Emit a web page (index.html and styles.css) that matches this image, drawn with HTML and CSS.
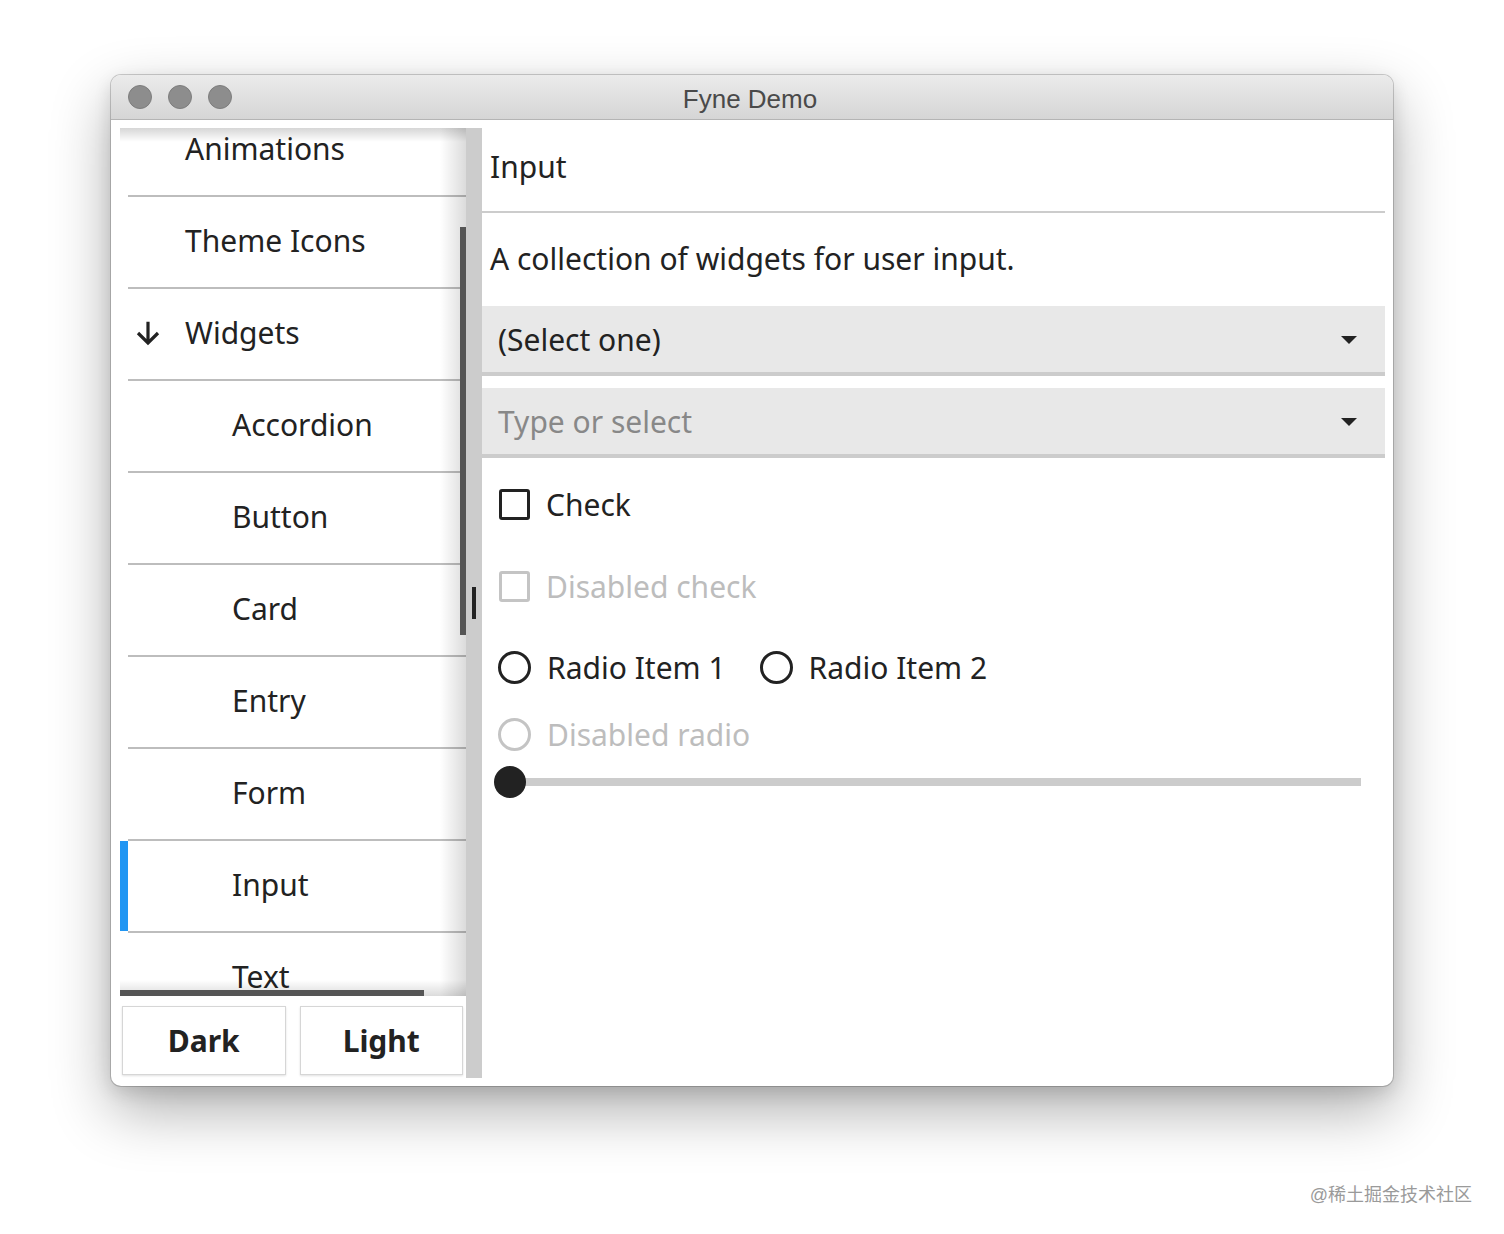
FILE: index.html
```html
<!DOCTYPE html>
<html lang="en">

<head>
    <meta charset="UTF-8">
    <title>Fyne Demo</title>
    <link rel="stylesheet" href="styles.css">
</head>

<body>
    <div class="window">
        <div class="titlebar">
            <div class="lights">
                <span></span>
                <span></span>
                <span></span>
            </div>
            <div class="title">Fyne Demo</div>
        </div>
        <div class="content">
            <div class="sidebar">
                <div class="nav">
                    <ul class="nav-list">
                        <li>Animations</li>
                        <li>Theme Icons</li>
                        <li class="branch">
                            <svg class="arrow" width="32" height="32" viewBox="0 0 24 24">
                                <path d="M12 3.5v16M4.5 12L12 19.5l7.5-7.5" fill="none" stroke="#222" stroke-width="2.4" />
                            </svg>
                            Widgets
                        </li>
                        <li class="child">Accordion</li>
                        <li class="child">Button</li>
                        <li class="child">Card</li>
                        <li class="child">Entry</li>
                        <li class="child">Form</li>
                        <li class="child active">Input</li>
                        <li class="child">Text</li>
                    </ul>
                    <div class="shade-top"></div>
                    <div class="shade-right"></div>
                    <div class="shade-bottom"></div>
                    <div class="vscroll"></div>
                    <div class="hscroll"></div>
                </div>
                <div class="theme-btns">
                    <div class="btn">Dark</div>
                    <div class="btn">Light</div>
                </div>
            </div>
            <div class="split"><span class="handle"></span></div>
            <div class="main">
                <div class="page-title">Input</div>
                <div class="page-intro">A collection of widgets for user input.</div>
                <div class="select">
                    <span>(Select one)</span>
                    <i class="caret"></i>
                </div>
                <div class="select entry">
                    <span>Type or select</span>
                    <i class="caret"></i>
                </div>
                <div class="row check-row">
                    <i class="box"></i>
                    <span>Check</span>
                </div>
                <div class="row check-row disabled">
                    <i class="box"></i>
                    <span>Disabled check</span>
                </div>
                <div class="row radio-row">
                    <div class="radio"><i class="dot"></i><span>Radio Item 1</span></div>
                    <div class="radio"><i class="dot"></i><span>Radio Item 2</span></div>
                </div>
                <div class="row radio-row disabled off">
                    <div class="radio"><i class="dot"></i><span>Disabled radio</span></div>
                </div>
                <div class="slider">
                    <div class="track"></div>
                    <div class="thumb"></div>
                </div>
            </div>
        </div>
    </div>
    <div class="watermark">@稀土掘金技术社区</div>
</body>

</html>
```

FILE: styles.css
```css
* {
    padding: 0;
    margin: 0;
    box-sizing: border-box;
}

body {
    width: 1504px;
    height: 1234px;
    background: #fff;
    font-family: "Noto Sans", "Open Sans", sans-serif;
    color: #222;
    position: relative;
    overflow: hidden;
    padding: 75px 0 0 111px;
}

.window {
    width: 1282px;
    height: 1011px;
    border-radius: 10px;
    overflow: hidden;
    display: flex;
    flex-direction: column;
    background: #fff;
    box-shadow: 0 0 0 1px rgba(0, 0, 0, 0.18), 0 24px 60px rgba(0, 0, 0, 0.32), 0 6px 18px rgba(0, 0, 0, 0.12);
}

.titlebar {
    position: relative;
    height: 45px;
    flex: none;
    background: linear-gradient(#ebebeb, #d5d5d5);
    border-bottom: 1px solid #b4b4b4;
    display: flex;
    align-items: center;
    justify-content: center;
}

.lights {
    position: absolute;
    left: 17px;
    top: 10px;
    display: flex;
    gap: 16px;
}

.lights span {
    width: 24px;
    height: 24px;
    border-radius: 50%;
    background: #8d8d8d;
    border: 1px solid #7d7d7d;
}

.title {
    font-family: "Liberation Sans", Arial, sans-serif;
    font-size: 26px;
    color: #4a4a4a;
    margin-top: 4px;
    margin-left: -4px;
}

.content {
    flex: 1;
    display: flex;
    padding: 8px 8px 8px 9px;
    min-height: 0;
}

/* sidebar */
.sidebar {
    width: 346px;
    display: flex;
    flex-direction: column;
}

.nav {
    position: relative;
    height: 868px;
    overflow: hidden;
}

.nav-list {
    list-style: none;
    margin-top: -23px;
}

.nav-list li {
    position: relative;
    margin-left: 8px;
    height: 92px;
    border-bottom: 2px solid #bdbdbd;
    display: flex;
    align-items: center;
    padding: 0 0 3px 57px;
    font-size: 30px;
}

.nav-list .branch .arrow {
    position: absolute;
    left: 4px;
    top: 28px;
}

.nav-list .child {
    padding-left: 104px;
}

.nav-list .active::before {
    content: "";
    position: absolute;
    left: -8px;
    top: 0;
    bottom: 0;
    width: 8px;
    background: #2196f3;
}

.shade-top {
    position: absolute;
    top: 0;
    left: 0;
    right: 0;
    height: 14px;
    background: linear-gradient(rgba(0, 0, 0, 0.16), rgba(0, 0, 0, 0));
}

.shade-right {
    position: absolute;
    top: 0;
    right: 0;
    bottom: 0;
    width: 26px;
    background: linear-gradient(to right, rgba(0, 0, 0, 0), rgba(0, 0, 0, 0.14));
}

.shade-bottom {
    position: absolute;
    left: 0;
    right: 0;
    bottom: 0;
    height: 16px;
    background: linear-gradient(rgba(0, 0, 0, 0), rgba(0, 0, 0, 0.14));
}

.vscroll {
    position: absolute;
    right: 0;
    top: 99px;
    width: 6px;
    height: 408px;
    background: #555;
}

.hscroll {
    position: absolute;
    left: 0;
    bottom: 0;
    width: 304px;
    height: 6px;
    background: #555;
}

.theme-btns {
    display: flex;
    gap: 14px;
    padding: 10px 3px 0 2px;
}

.btn {
    flex: 1;
    height: 69px;
    background: #fff;
    border: 1px solid #d6d6d6;
    box-shadow: 0 1px 2px rgba(0, 0, 0, 0.12);
    display: flex;
    align-items: center;
    justify-content: center;
    font-size: 30px;
    font-weight: bold;
}

.split {
    position: relative;
    width: 16px;
    background: #cccccc;
}

.split .handle {
    position: absolute;
    left: 6px;
    top: 459px;
    width: 4px;
    height: 32px;
    background: #222;
}

/* main panel */
.main {
    flex: 1;
    display: flex;
    flex-direction: column;
}

.page-title {
    height: 85px;
    padding: 0 0 7px 8px;
    display: flex;
    align-items: center;
    font-size: 30px;
    border-bottom: 2px solid #cccccc;
}

.page-intro {
    height: 93px;
    padding: 0 0 2px 8px;
    display: flex;
    align-items: center;
    font-size: 30px;
}

.select {
    position: relative;
    height: 70px;
    background: #e8e8e8;
    border-bottom: 4px solid #cccccc;
    padding-left: 16px;
    display: flex;
    align-items: center;
    font-size: 30px;
}

.select .caret {
    position: absolute;
    right: 28px;
    top: 30px;
    border-left: 8px solid transparent;
    border-right: 8px solid transparent;
    border-top: 8px solid #222;
}

.entry {
    margin-top: 12px;
    color: #888;
}

.row {
    height: 64px;
    display: flex;
    align-items: center;
    padding-left: 16px;
    font-size: 30px;
}

.check-row {
    margin-top: 14px;
}

.check-row.disabled {
    margin-top: 18px;
}

.check-row .box {
    width: 31px;
    height: 31px;
    border: 3px solid #222;
    border-radius: 3px;
    margin-left: 1px;
    margin-right: 16px;
}

.disabled {
    color: #bdbdbd;
}

.disabled .box,
.disabled .dot {
    border-color: #c4c4c4 !important;
}

.radio-row {
    margin-top: 17px;
    gap: 34px;
}

.radio-row.off {
    margin-top: 3px;
}

.radio {
    display: flex;
    align-items: center;
}

.radio .dot {
    width: 33px;
    height: 33px;
    border: 3px solid #222;
    border-radius: 50%;
    margin-right: 16px;
}

.slider {
    position: relative;
    height: 34px;
    margin-top: -1px;
}

.slider .track {
    position: absolute;
    left: 28px;
    right: 24px;
    top: 13px;
    height: 8px;
    background: #cccccc;
}

.slider .thumb {
    position: absolute;
    left: 12px;
    top: 1px;
    width: 32px;
    height: 32px;
    border-radius: 50%;
    background: #222;
}

.watermark {
    position: absolute;
    right: 32px;
    top: 1180px;
    font-family: "Liberation Sans", "Noto Sans CJK SC", sans-serif;
    font-size: 18px;
    color: #9a9a9a;
}
```
